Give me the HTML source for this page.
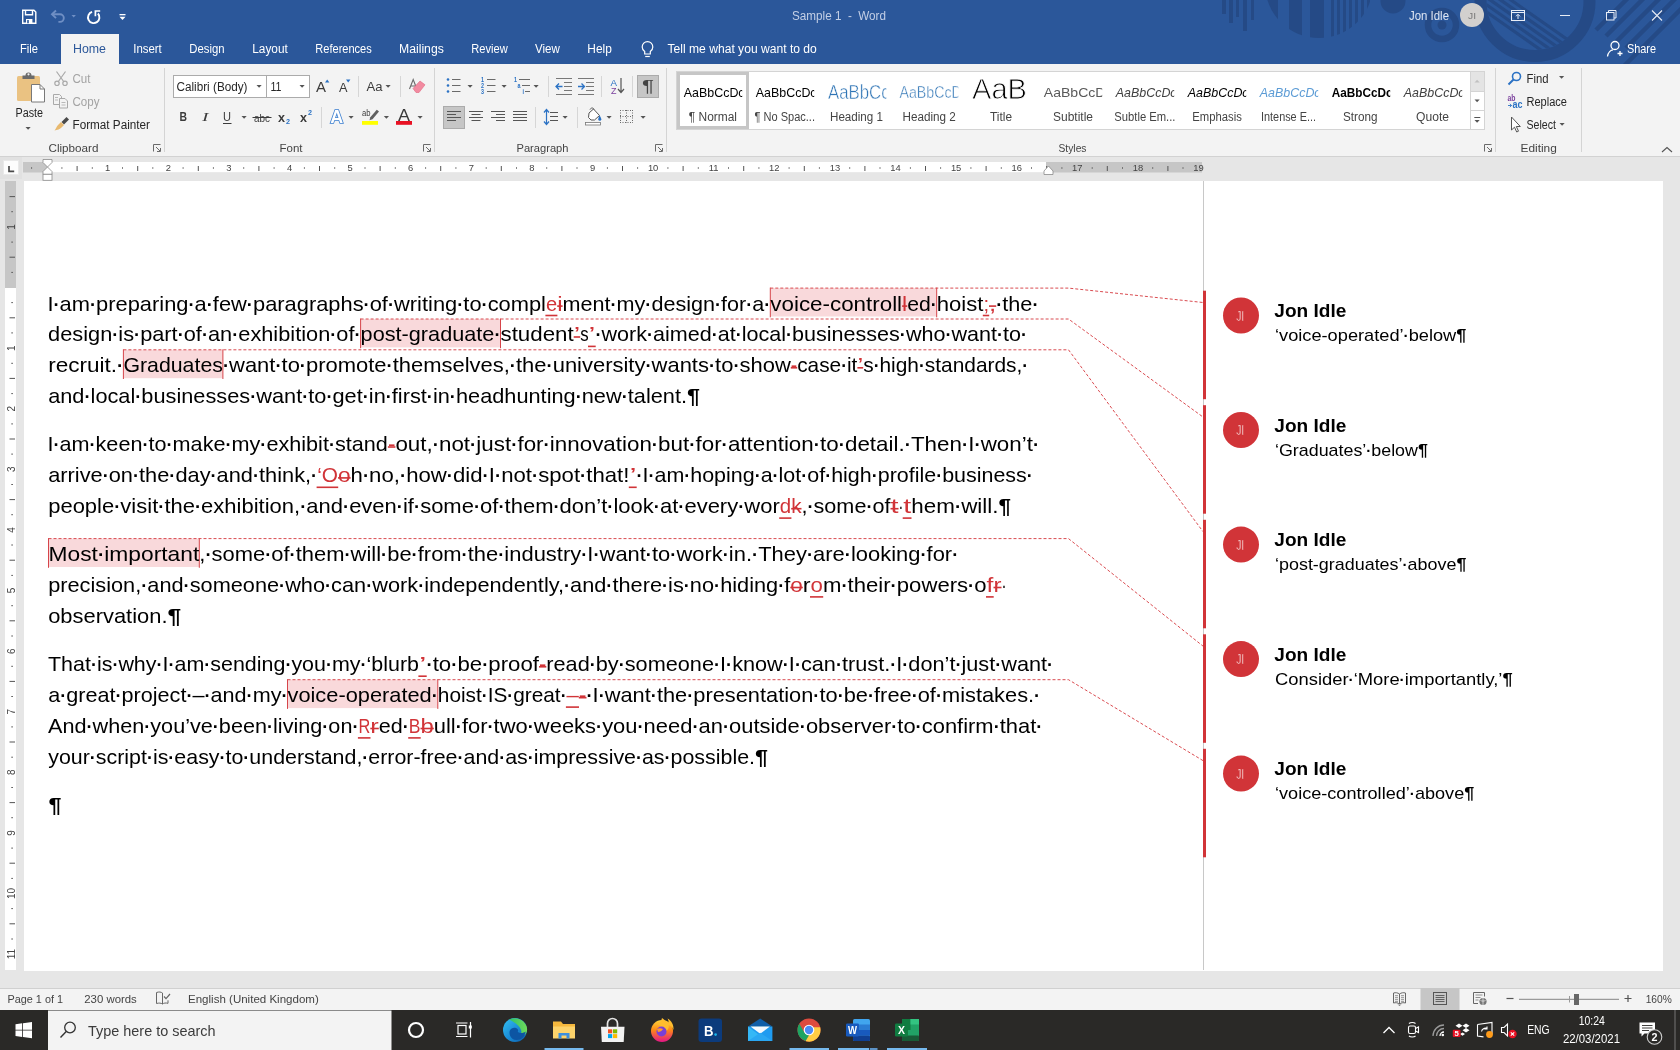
<!DOCTYPE html>
<html>
<head>
<meta charset="utf-8">
<title>Sample 1 - Word</title>
<style>
*{box-sizing:border-box;margin:0;padding:0}
html,body{width:1680px;height:1050px;overflow:hidden;background:#e6e6e6;font-family:"Liberation Sans",sans-serif;}
.abs{position:absolute}
svg{overflow:visible;will-change:transform}
svg text{font-family:"Liberation Sans",sans-serif;white-space:pre}
#titlebar{position:absolute;left:0;top:0;width:1680px;height:64px;background:#2b579a;overflow:hidden}
#ribbon{position:absolute;left:0;top:64px;width:1680px;height:93px;background:#f3f3f3;border-bottom:1px solid #d2d2d2}
#rulerrow{position:absolute;left:0;top:157px;width:1680px;height:24px;background:#e6e6e6}
#page{position:absolute;left:24px;top:181px;width:1639px;height:790px;background:#fff}
#vruler{position:absolute;left:0;top:181px;width:24px;height:789px;background:#e6e6e6}
#status{position:absolute;left:0;top:988px;width:1680px;height:22px;background:#f3f3f3;border-top:1px solid #d0d0d0}
#taskbar{position:absolute;left:0;top:1010px;width:1680px;height:40px;background:#2a2927}
.gsep{position:absolute;top:4px;width:1px;height:84px;background:#d4d4d4}
.ssep{position:absolute;width:1px;height:22px;background:#d6d6d6}
</style>
</head>
<body>
<div id="titlebar">
<!-- decorative background pattern -->
<svg class="abs" style="left:1200px;top:0" width="480" height="64" viewBox="1200 0 480 64">
 <defs><clipPath id="semi"><circle cx="1319" cy="-16" r="54"/></clipPath><clipPath id="bigin"><circle cx="1535" cy="1.500" r="48.500"/></clipPath></defs>
 <g fill="#254a86">
  <rect x="1222" y="0" width="4" height="14"/><rect x="1229" y="0" width="4" height="23"/><rect x="1236" y="0" width="3" height="17"/>
  <rect x="1243" y="0" width="4" height="31"/><rect x="1251" y="0" width="3" height="20"/>
  <g clip-path="url(#semi)">
   <rect x="1262" y="0" width="16" height="40"/><rect x="1289" y="0" width="13" height="40"/><rect x="1310" y="0" width="14" height="40"/>
   <rect x="1331" y="0" width="3" height="40"/><rect x="1337" y="0" width="3" height="40"/><rect x="1343" y="0" width="3" height="40"/>
   <rect x="1349" y="0" width="3" height="40"/><rect x="1355" y="0" width="3" height="40"/><rect x="1361" y="0" width="3" height="40"/><rect x="1367" y="0" width="3" height="40"/>
  </g>
  <circle cx="1393" cy="1" r="12.500"/>
  <circle cx="1442" cy="25" r="4.500"/>
 </g>
 <circle cx="1442" cy="25" r="14" fill="none" stroke="#254a86" stroke-width="6.500"/>
 <circle cx="1535" cy="1.500" r="54.500" fill="none" stroke="#254a86" stroke-width="12"/>
 <g stroke="#254a86" stroke-width="3.200" clip-path="url(#bigin)"><line x1="1491" y1="-14" x2="1611" y2="70"/><line x1="1480.6" y1="-14" x2="1600.6" y2="70"/><line x1="1470.2" y1="-14" x2="1590.2" y2="70"/><line x1="1459.8" y1="-14" x2="1579.8" y2="70"/><line x1="1449.4" y1="-14" x2="1569.4" y2="70"/></g>
 <g stroke="#254a86" stroke-width="4.500">
  <line x1="1596" y1="30" x2="1636" y2="-10"/><line x1="1606" y1="36" x2="1652" y2="-10"/><line x1="1616" y1="42" x2="1668" y2="-10"/>
  <line x1="1626" y1="48" x2="1684" y2="-10"/><line x1="1612" y1="78" x2="1700" y2="-10"/>
 </g>
</svg>
<!-- quick access toolbar -->
<svg class="abs" style="left:0;top:0" width="140" height="32" viewBox="0 0 140 32" fill="none" stroke="#fff" stroke-width="1.4">
 <path d="M22.7 10.2h11.2l1.9 1.9v11.2H22.7z"/><path d="M25.5 10.5v4.2h7v-4.2" /><rect x="26" y="19" width="6.4" height="4.3" fill="#fff" stroke="none"/><rect x="27.2" y="20" width="1.6" height="3.3" fill="#2b579a" stroke="none"/>
 <g stroke="#6f8fc4" stroke-width="1.900"><path d="M52.200 14.300h7.800a3.800 3.800 0 0 1 0 7.600h-1.600"/><path d="M56 10.500l-4 3.800 4 3.800"/></g>
 <path d="M71.5 15l2.2 2.4 2.2-2.4z" fill="#6f8fc4" stroke="none"/>
 <path d="M92.100 11.900A5.700 5.700 0 1 0 97.900 13.500" stroke-width="1.900"/><path d="M95.400 16.200V11H100.200" stroke-width="1.700"/>
 <rect x="119.5" y="14" width="6" height="1.3" fill="#fff" stroke="none"/><path d="M119.5 16.8l3 3.2 3-3.2z" fill="#fff" stroke="none"/>
</svg>
<div class="abs" style="left:1460px;top:3px;width:24px;height:24px;border-radius:12px;background:#d2d0ce"></div>
<svg class="abs" style="left:1500px;top:0" width="180" height="32" viewBox="1500 0 180 32" fill="none" stroke="#e8edf6" stroke-width="1">
 <rect x="1511.5" y="10.5" width="13" height="10"/><line x1="1511" y1="12.5" x2="1525" y2="12.5"/><path d="M1518 19v-4.5M1516 16.3l2-2 2 2"/>
 <line x1="1560" y1="15.5" x2="1570" y2="15.5"/>
 <rect x="1606.500" y="12.5" width="7.5" height="7.500"/><path d="M1608.5 12.500v-2h7.500v7.500h-2"/>
 <path d="M1652 10.5l10 10M1662 10.5l-10 10" stroke-width="1.1"/>
</svg>
<!-- tabs -->
<div class="abs" style="left:61px;top:34px;width:58px;height:30px;background:#f3f3f3"></div>
<svg class="abs" style="left:638px;top:38px" width="20" height="22" viewBox="0 0 20 22" fill="none" stroke="#fff" stroke-width="1.2"><path d="M6.700 13.500c-1.600-1.200-2.500-2.600-2.500-4.600a5.300 5.300 0 0 1 10.600 0c0 2-.9 3.400-2.500 4.600v2.500h-5.600z"/><path d="M7.200 18.500h4.600"/></svg>
<svg class="abs" style="left:1604px;top:38px" width="22" height="22" viewBox="0 0 22 22" fill="none" stroke="#fff" stroke-width="1.3"><circle cx="11" cy="7.500" r="4"/><path d="M3.500 18.500c.6-4 3.300-6.400 5.600-6.600"/><path d="M13.500 15.500h5M16 13v5"/></svg>
</div>
<div id="ribbon">
<div class="gsep" style="left:164px"></div><div class="gsep" style="left:434px"></div><div class="gsep" style="left:666px"></div><div class="gsep" style="left:1495px"></div><div class="gsep" style="left:1581px"></div>
<svg class="abs" style="left:0;top:0" width="1680" height="93" viewBox="0 64 1680 93" fill="none">
<!-- ===== Clipboard ===== -->
<g>
 <rect x="17" y="76" width="23" height="25" rx="1.500" fill="#eac282"/>
 <path d="M22.500 79v-3.500h3a3 3 0 0 1 6 0h3v3.500z" fill="#6b6b6b"/>
 <circle cx="28.500" cy="74.300" r="1.100" fill="#f3f3f3"/>
 <path d="M31.500 84.500h8.500l4.500 4.500v13h-13z" fill="#fff" stroke="#797979"/>
 <path d="M40 84.500v4.500h4.500" stroke="#797979"/>
 <path d="M25.500 127l2.600 2.800 2.600-2.800z" fill="#555"/>
</g>
<g stroke="#a9a9a9" stroke-width="1.200">
 <path d="M56.500 71.500l7.500 10.500M65.500 71.500l-7.500 10.500"/><circle cx="57" cy="83.300" r="2.200"/><circle cx="65" cy="83.300" r="2.200"/>
 <path d="M53.500 94.500h6l2 2v8h-8z" stroke-width="1"/><path d="M59.500 98.500h5.500l2.500 2.500v7h-8z" fill="#f3f3f3" stroke-width="1"/><path d="M61.500 102.500h4M61.500 105h4" stroke-width=".8"/><path d="M55 97.500h3M55 100h3" stroke-width=".8"/>
</g>
<g>
 <path d="M66.500 117l2.500 2.500-5 5-2.500-2.500z" fill="#4a4a4a"/>
 <path d="M61 122l3 3-2.200 2.200c-1.800 1.800-4.500 2.800-7.300 3.300 1.500-1.600 1.700-3.300 3.500-5.500z" fill="#e8b96f"/>
</g>
<!-- dialog launchers -->
<g stroke="#6a6a6a" stroke-width="1">
 <g transform="translate(0)"><path d="M153.500 151.500v-7h7"/><path d="M156 147l4 4M160.500 148v3.500h-3.500"/></g>
 <g transform="translate(270)"><path d="M153.500 151.500v-7h7"/><path d="M156 147l4 4M160.500 148v3.500h-3.500"/></g>
 <g transform="translate(502)"><path d="M153.500 151.500v-7h7"/><path d="M156 147l4 4M160.500 148v3.500h-3.500"/></g>
 <g transform="translate(1331)"><path d="M153.500 151.500v-7h7"/><path d="M156 147l4 4M160.500 148v3.500h-3.500"/></g>
</g>
<!-- ===== Font ===== -->
<rect x="173.500" y="75.500" width="93" height="22" fill="#fff" stroke="#ababab"/>
<rect x="266.500" y="75.500" width="43" height="22" fill="#fff" stroke="#ababab"/>
<g fill="#555"><path d="M256.500 85l2.600 2.800 2.600-2.800z"/><path d="M299.500 85l2.600 2.800 2.600-2.800z"/>
 <path d="M385.500 85l2.600 2.800 2.600-2.800z"/><path d="M241.500 116l2.600 2.800 2.600-2.800z"/>
 <path d="M348.500 116l2.600 2.800 2.600-2.800z"/><path d="M383.800 116l2.600 2.800 2.600-2.800z"/><path d="M417.500 116l2.600 2.800 2.600-2.800z"/>
</g>
<path d="M325 82.500l2.200-3 2.200 3z" fill="#2b72c4"/><path d="M346 79.500l2.200 3 2.200-3z" fill="#2b72c4"/>
<g stroke="#d6d6d6"><path d="M358.500 76v21M400.500 76v21M321.500 107v21"/></g>
<!-- clear formatting -->
<path d="M409.500 89l3.700-9.500 3.700 9.500M410.800 86h4.800" stroke="#6a6a6a" stroke-width="1.100"/>
<path d="M413 88.500l7-7.500 5 3.800-6 7.700h-3z" fill="#f28aa0" stroke="#e0667f" stroke-width=".6"/>
<!-- underline bar, strike -->
<path d="M223 123.500h8.500" stroke="#3b3b3b" stroke-width="1"/>
<path d="M252.500 117.500h19" stroke="#3b3b3b" stroke-width="1"/>
<!-- text effects A -->
<!-- highlight -->
<rect x="362" y="121" width="16" height="3.800" fill="#ffff00"/>
<path d="M369.500 120.300l.8-3 6.500-7.500 2.200 1.800-6.500 7.600z" fill="#5f5f5f"/>
<!-- font color -->
<rect x="396" y="121" width="16" height="3.800" fill="#e81123"/>
<!-- ===== Paragraph row 1 ===== -->
<g fill="#2b72c4"><circle cx="448" cy="79.500" r="1.300"/><circle cx="448" cy="85.500" r="1.300"/><circle cx="448" cy="91.500" r="1.300"/></g>
<g stroke="#6a6a6a" stroke-width="1"><path d="M452 79.500h8.500M452 85.500h8.500M452 91.500h8.500"/>
 <path d="M487 79.500h8.500M487 85.500h8.500M487 91.500h8.500"/>
 <path d="M519 79.500h11M522 85.500h8M525 91.500h5"/></g>
<g fill="#555"><path d="M467.500 85l2.600 2.800 2.600-2.800z"/><path d="M501.500 85l2.600 2.800 2.600-2.800z"/><path d="M533.500 85l2.600 2.800 2.600-2.800z"/>
 <path d="M562.500 116l2.600 2.800 2.600-2.800z"/><path d="M606.500 116l2.600 2.800 2.600-2.800z"/><path d="M640.500 116l2.600 2.800 2.600-2.800z"/></g>
<g stroke="#d6d6d6"><path d="M548.500 76v21M601.500 76v21M632.500 76v21M535.500 107v21M577.500 107v21"/></g>
<!-- outdent / indent -->
<g stroke="#6a6a6a"><path d="M556 78.500h16M564 82.500h8M564 86.500h8M564 90.500h8M556 94.500h16" stroke-width=".9"/>
 <path d="M578 78.500h16M586 82.500h8M586 86.500h8M586 90.500h8M578 94.500h16" stroke-width=".9"/></g>
<g stroke="#2b72c4" stroke-width="1.300"><path d="M562.500 86.500h-6M559 83.500l-3 3 3 3"/><path d="M578 86.500h6M581.500 83.500l3 3-3 3"/></g>
<!-- sort -->
<path d="M621 78v14M618 89l3 3.500 3-3.500" stroke="#555" stroke-width="1.200"/>
<!-- pilcrow button -->
<rect x="637.500" y="75.500" width="21" height="22" fill="#c6c6c6" stroke="#ababab"/>
<!-- ===== Paragraph row 2 ===== -->
<rect x="443.500" y="106.500" width="21" height="22" fill="#c6c6c6" stroke="#ababab"/>
<g stroke="#555" stroke-width="1">
 <path d="M447 111.500h14M447 114.500h9M447 117.500h14M447 120.500h9"/>
 <path d="M469 111.500h14M471.500 114.500h9M469 117.500h14M471.500 120.500h9"/>
 <path d="M491 111.500h14M496 114.500h9M491 117.500h14M496 120.500h9"/>
 <path d="M513 111.500h14M513 114.500h14M513 117.500h14M513 120.500h14"/>
 <path d="M550 112.500h8M550 116.500h8M550 120.500h8"/>
</g>
<path d="M546.500 110v14M544 112.500l2.500-3 2.500 3M544 121.500l2.500 3 2.500-3" stroke="#2b72c4" stroke-width="1.200"/>
<!-- shading bucket -->
<path d="M589 113l4.500-4 6 6.500-5 4.500h-3.500l-2.500-2.500z" fill="#fff" stroke="#555" stroke-width="1"/>
<path d="M590 109.500c1-2 3.500-2 4 0" stroke="#555"/>
<path d="M599.500 115.500c1 1.500 1.800 2.800 1.800 3.800a1.500 1.500 0 0 1-3 0c0-1 .5-2.300 1.200-3.800z" fill="#2b72c4"/>
<rect x="585.500" y="122.500" width="15" height="2.500" fill="#fff" stroke="#777" stroke-width=".8"/>
<!-- borders -->
<g stroke="#6a6a6a" stroke-width="1" stroke-dasharray="1 1.500"><path d="M620 110.500h13M620 116.500h13M620 122.500h13M620.500 110v13M626.500 110v13M632.500 110v13"/></g>
<!-- ===== Styles gallery ===== -->
<rect x="676.500" y="71.500" width="808" height="58" fill="#fff" stroke="#d4d4d4"/>
<rect x="678.500" y="73.500" width="69" height="54" fill="#fff" stroke="#c6c6c6" stroke-width="3"/>
<g stroke="#d4d4d4"><path d="M1470.500 71.500v58M1470.500 91.500h14M1470.500 110.500h14"/></g>
<rect x="1471" y="72" width="13" height="19" fill="#e4e4e4"/>
<path d="M1474.500 82.500l2.600-2.800 2.600 2.800z" fill="#c0c0c0"/>
<path d="M1474.500 99.500l2.600 2.800 2.600-2.800z" fill="#555"/>
<path d="M1474.300 117.500h6" stroke="#555"/><path d="M1474.500 120l2.600 2.800 2.600-2.800z" fill="#555"/>
<!-- ===== Editing ===== -->
<circle cx="1516.500" cy="76.500" r="4" stroke="#2b72c4" stroke-width="1.600"/><path d="M1513.500 79.500l-5 5" stroke="#2b72c4" stroke-width="2"/>
<path d="M1508 105.500h3.500M1509.800 103.800l1.800 1.700-1.800 1.700" stroke="#2b72c4" stroke-width=".9"/>
<path d="M1511.500 117v13l3-2.800 2.200 4.800 1.800-.8-2.200-4.700h4z" fill="#fff" stroke="#555" stroke-width="1" stroke-linejoin="round"/>
<g fill="#555"><path d="M1559 76l2.600 2.800 2.600-2.800z"/><path d="M1559.500 123l2.600 2.800 2.600-2.800z"/></g>
<path d="M1662 152l5-4.500 5 4.500" stroke="#555" stroke-width="1.100"/>
</svg>
</div>
<div id="rulerrow"></div>
<div id="vruler"></div>
<div id="page"></div>
<svg class="abs" style="left:0;top:157px" width="1680" height="830" viewBox="0 157 1680 830" font-family="Liberation Sans, sans-serif">
<rect x="0" y="157" width="22" height="22" fill="#e1e1e1"/>
<rect x="3.5" y="160.500" width="15" height="14" fill="#fdfdfd" stroke="#e9e9e9"/>
<path d="M9 166v5.300h5.200" fill="none" stroke="#4a4a4a" stroke-width="1.700"/>
<rect x="23" y="162" width="1179" height="10.500" fill="#c6c6c6"/>
<rect x="47" y="162" width="999" height="10.500" fill="#ffffff"/>
<rect x="31.1" y="167.300" width="1" height="1.400" fill="#555"/>
<rect x="61.4" y="167.300" width="1" height="1.400" fill="#555"/>
<rect x="76.6" y="166" width="1" height="5" fill="#555"/>
<rect x="91.8" y="167.300" width="1" height="1.400" fill="#555"/>
<text x="107.7" y="171" font-size="9.4" fill="#444" text-anchor="middle">1</text>
<rect x="122.0" y="167.300" width="1" height="1.400" fill="#555"/>
<rect x="137.2" y="166" width="1" height="5" fill="#555"/>
<rect x="152.3" y="167.300" width="1" height="1.400" fill="#555"/>
<text x="168.3" y="171" font-size="9.4" fill="#444" text-anchor="middle">2</text>
<rect x="182.6" y="167.300" width="1" height="1.400" fill="#555"/>
<rect x="197.8" y="166" width="1" height="5" fill="#555"/>
<rect x="212.9" y="167.300" width="1" height="1.400" fill="#555"/>
<text x="228.9" y="171" font-size="9.4" fill="#444" text-anchor="middle">3</text>
<rect x="243.2" y="167.300" width="1" height="1.400" fill="#555"/>
<rect x="258.4" y="166" width="1" height="5" fill="#555"/>
<rect x="273.6" y="167.300" width="1" height="1.400" fill="#555"/>
<text x="289.5" y="171" font-size="9.4" fill="#444" text-anchor="middle">4</text>
<rect x="303.9" y="167.300" width="1" height="1.400" fill="#555"/>
<rect x="319.0" y="166" width="1" height="5" fill="#555"/>
<rect x="334.2" y="167.300" width="1" height="1.400" fill="#555"/>
<text x="350.1" y="171" font-size="9.4" fill="#444" text-anchor="middle">5</text>
<rect x="364.5" y="167.300" width="1" height="1.400" fill="#555"/>
<rect x="379.6" y="166" width="1" height="5" fill="#555"/>
<rect x="394.8" y="167.300" width="1" height="1.400" fill="#555"/>
<text x="410.7" y="171" font-size="9.4" fill="#444" text-anchor="middle">6</text>
<rect x="425.1" y="167.300" width="1" height="1.400" fill="#555"/>
<rect x="440.2" y="166" width="1" height="5" fill="#555"/>
<rect x="455.4" y="167.300" width="1" height="1.400" fill="#555"/>
<text x="471.3" y="171" font-size="9.4" fill="#444" text-anchor="middle">7</text>
<rect x="485.7" y="167.300" width="1" height="1.400" fill="#555"/>
<rect x="500.8" y="166" width="1" height="5" fill="#555"/>
<rect x="516.0" y="167.300" width="1" height="1.400" fill="#555"/>
<text x="531.9" y="171" font-size="9.4" fill="#444" text-anchor="middle">8</text>
<rect x="546.2" y="167.300" width="1" height="1.400" fill="#555"/>
<rect x="561.4" y="166" width="1" height="5" fill="#555"/>
<rect x="576.5" y="167.300" width="1" height="1.400" fill="#555"/>
<text x="592.5" y="171" font-size="9.4" fill="#444" text-anchor="middle">9</text>
<rect x="606.9" y="167.300" width="1" height="1.400" fill="#555"/>
<rect x="622.0" y="166" width="1" height="5" fill="#555"/>
<rect x="637.1" y="167.300" width="1" height="1.400" fill="#555"/>
<text x="653.1" y="171" font-size="9.4" fill="#444" text-anchor="middle">10</text>
<rect x="667.4" y="167.300" width="1" height="1.400" fill="#555"/>
<rect x="682.6" y="166" width="1" height="5" fill="#555"/>
<rect x="697.8" y="167.300" width="1" height="1.400" fill="#555"/>
<text x="713.7" y="171" font-size="9.4" fill="#444" text-anchor="middle">11</text>
<rect x="728.0" y="167.300" width="1" height="1.400" fill="#555"/>
<rect x="743.2" y="166" width="1" height="5" fill="#555"/>
<rect x="758.4" y="167.300" width="1" height="1.400" fill="#555"/>
<text x="774.3" y="171" font-size="9.4" fill="#444" text-anchor="middle">12</text>
<rect x="788.6" y="167.300" width="1" height="1.400" fill="#555"/>
<rect x="803.8" y="166" width="1" height="5" fill="#555"/>
<rect x="818.9" y="167.300" width="1" height="1.400" fill="#555"/>
<text x="834.9" y="171" font-size="9.4" fill="#444" text-anchor="middle">13</text>
<rect x="849.2" y="167.300" width="1" height="1.400" fill="#555"/>
<rect x="864.4" y="166" width="1" height="5" fill="#555"/>
<rect x="879.5" y="167.300" width="1" height="1.400" fill="#555"/>
<text x="895.5" y="171" font-size="9.4" fill="#444" text-anchor="middle">14</text>
<rect x="909.9" y="167.300" width="1" height="1.400" fill="#555"/>
<rect x="925.0" y="166" width="1" height="5" fill="#555"/>
<rect x="940.1" y="167.300" width="1" height="1.400" fill="#555"/>
<text x="956.1" y="171" font-size="9.4" fill="#444" text-anchor="middle">15</text>
<rect x="970.4" y="167.300" width="1" height="1.400" fill="#555"/>
<rect x="985.6" y="166" width="1" height="5" fill="#555"/>
<rect x="1000.8" y="167.300" width="1" height="1.400" fill="#555"/>
<text x="1016.7" y="171" font-size="9.4" fill="#444" text-anchor="middle">16</text>
<rect x="1031.0" y="167.300" width="1" height="1.400" fill="#555"/>
<rect x="1046.2" y="166" width="1" height="5" fill="#555"/>
<rect x="1061.4" y="167.300" width="1" height="1.400" fill="#555"/>
<text x="1077.3" y="171" font-size="9.4" fill="#444" text-anchor="middle">17</text>
<rect x="1091.7" y="167.300" width="1" height="1.400" fill="#555"/>
<rect x="1106.8" y="166" width="1" height="5" fill="#555"/>
<rect x="1122.0" y="167.300" width="1" height="1.400" fill="#555"/>
<text x="1137.9" y="171" font-size="9.4" fill="#444" text-anchor="middle">18</text>
<rect x="1152.2" y="167.300" width="1" height="1.400" fill="#555"/>
<rect x="1167.4" y="166" width="1" height="5" fill="#555"/>
<rect x="1182.5" y="167.300" width="1" height="1.400" fill="#555"/>
<text x="1198.5" y="171" font-size="9.4" fill="#444" text-anchor="middle">19</text>
<path d="M43 159.500h9v3l-4.500 4.500l-4.500-4.500z" fill="#fff" stroke="#8a8a8a" stroke-width=".8"/>
<path d="M43 174.300v-2.800l4.500-4.500l4.500 4.500v2.800z" fill="#fff" stroke="#8a8a8a" stroke-width=".8"/>
<rect x="43" y="174.300" width="9" height="6" fill="#fff" stroke="#8a8a8a" stroke-width=".8"/>
<path d="M1044 174.500v-3.500l4.500-5l4.500 5v3.500z" fill="#fff" stroke="#8a8a8a" stroke-width=".8"/>
<rect x="5" y="181" width="11" height="789" fill="#ffffff"/>
<rect x="5" y="181" width="11" height="107" fill="#c6c6c6"/>
<rect x="9.500" y="196.1" width="5.500" height="1" fill="#555"/>
<rect x="11.300" y="211.2" width="1.600" height="1" fill="#555"/>
<text transform="translate(14.5,226.9) rotate(-90)" font-size="10" fill="#444" text-anchor="middle">1</text>
<rect x="11.300" y="241.6" width="1.600" height="1" fill="#555"/>
<rect x="9.500" y="256.7" width="5.500" height="1" fill="#555"/>
<rect x="11.300" y="271.9" width="1.600" height="1" fill="#555"/>
<rect x="11.300" y="302.1" width="1.600" height="1" fill="#555"/>
<rect x="9.500" y="317.3" width="5.500" height="1" fill="#555"/>
<rect x="11.300" y="332.4" width="1.600" height="1" fill="#555"/>
<text transform="translate(14.5,348.1) rotate(-90)" font-size="10" fill="#444" text-anchor="middle">1</text>
<rect x="11.300" y="362.8" width="1.600" height="1" fill="#555"/>
<rect x="9.500" y="377.9" width="5.500" height="1" fill="#555"/>
<rect x="11.300" y="393.1" width="1.600" height="1" fill="#555"/>
<text transform="translate(14.5,408.7) rotate(-90)" font-size="10" fill="#444" text-anchor="middle">2</text>
<rect x="11.300" y="423.4" width="1.600" height="1" fill="#555"/>
<rect x="9.500" y="438.5" width="5.500" height="1" fill="#555"/>
<rect x="11.300" y="453.6" width="1.600" height="1" fill="#555"/>
<text transform="translate(14.5,469.3) rotate(-90)" font-size="10" fill="#444" text-anchor="middle">3</text>
<rect x="11.300" y="484.0" width="1.600" height="1" fill="#555"/>
<rect x="9.500" y="499.1" width="5.500" height="1" fill="#555"/>
<rect x="11.300" y="514.2" width="1.600" height="1" fill="#555"/>
<text transform="translate(14.5,529.9) rotate(-90)" font-size="10" fill="#444" text-anchor="middle">4</text>
<rect x="11.300" y="544.5" width="1.600" height="1" fill="#555"/>
<rect x="9.500" y="559.7" width="5.500" height="1" fill="#555"/>
<rect x="11.300" y="574.9" width="1.600" height="1" fill="#555"/>
<text transform="translate(14.5,590.5) rotate(-90)" font-size="10" fill="#444" text-anchor="middle">5</text>
<rect x="11.300" y="605.2" width="1.600" height="1" fill="#555"/>
<rect x="9.500" y="620.3" width="5.500" height="1" fill="#555"/>
<rect x="11.300" y="635.5" width="1.600" height="1" fill="#555"/>
<text transform="translate(14.5,651.1) rotate(-90)" font-size="10" fill="#444" text-anchor="middle">6</text>
<rect x="11.300" y="665.8" width="1.600" height="1" fill="#555"/>
<rect x="9.500" y="680.9" width="5.500" height="1" fill="#555"/>
<rect x="11.300" y="696.0" width="1.600" height="1" fill="#555"/>
<text transform="translate(14.5,711.7) rotate(-90)" font-size="10" fill="#444" text-anchor="middle">7</text>
<rect x="11.300" y="726.4" width="1.600" height="1" fill="#555"/>
<rect x="9.500" y="741.5" width="5.500" height="1" fill="#555"/>
<rect x="11.300" y="756.7" width="1.600" height="1" fill="#555"/>
<text transform="translate(14.5,772.3) rotate(-90)" font-size="10" fill="#444" text-anchor="middle">8</text>
<rect x="11.300" y="787.0" width="1.600" height="1" fill="#555"/>
<rect x="9.500" y="802.1" width="5.500" height="1" fill="#555"/>
<rect x="11.300" y="817.2" width="1.600" height="1" fill="#555"/>
<text transform="translate(14.5,832.9) rotate(-90)" font-size="10" fill="#444" text-anchor="middle">9</text>
<rect x="11.300" y="847.6" width="1.600" height="1" fill="#555"/>
<rect x="9.500" y="862.7" width="5.500" height="1" fill="#555"/>
<rect x="11.300" y="877.9" width="1.600" height="1" fill="#555"/>
<text transform="translate(14.5,893.5) rotate(-90)" font-size="10" fill="#444" text-anchor="middle">10</text>
<rect x="11.300" y="908.1" width="1.600" height="1" fill="#555"/>
<rect x="9.500" y="923.3" width="5.500" height="1" fill="#555"/>
<rect x="11.300" y="938.5" width="1.600" height="1" fill="#555"/>
<text transform="translate(14.5,954.1) rotate(-90)" font-size="10" fill="#444" text-anchor="middle">11</text>
<rect x="1203" y="181" width="1" height="789" fill="#c8c8c8"/>
</svg>
<svg class="abs" style="left:0;top:0" width="1680" height="1050" viewBox="0 0 1680 1050" font-family="Liberation Sans, sans-serif">
<rect x="770.3" y="288.1" width="166.4" height="28.4" fill="#f9d9db"/>
<path d="M770.3 287.6V317.3M936.7 287.6V317.3" stroke="#d6454a" stroke-width="1" fill="none"/>
<path d="M770.3 288.1H1068.5L1203 302.5" stroke="#d94b50" stroke-width="1" stroke-dasharray="3 2" fill="none"/>
<rect x="360.6" y="319.0" width="139.9" height="28.4" fill="#f9d9db"/>
<path d="M360.6 318.5V348.2M500.5 318.5V348.2" stroke="#d6454a" stroke-width="1" fill="none"/>
<path d="M360.6 319.0H1068.5L1203 417.0" stroke="#d94b50" stroke-width="1" stroke-dasharray="3 2" fill="none"/>
<rect x="123.4" y="349.8" width="99.5" height="28.4" fill="#f9d9db"/>
<path d="M123.4 349.3V379.0M222.9 349.3V379.0" stroke="#d6454a" stroke-width="1" fill="none"/>
<path d="M123.4 349.8H1068.5L1203 531.6" stroke="#d94b50" stroke-width="1" stroke-dasharray="3 2" fill="none"/>
<rect x="48.5" y="538.6" width="150.8" height="28.4" fill="#f9d9db"/>
<path d="M48.5 538.1V567.8M199.3 538.1V567.8" stroke="#d6454a" stroke-width="1" fill="none"/>
<path d="M48.5 538.6H1068.5L1203 646.1" stroke="#d94b50" stroke-width="1" stroke-dasharray="3 2" fill="none"/>
<rect x="287.5" y="679.7" width="150.3" height="28.4" fill="#f9d9db"/>
<path d="M287.5 679.2V708.9M437.8 679.2V708.9" stroke="#d6454a" stroke-width="1" fill="none"/>
<path d="M287.5 679.7H1068.5L1203 760.6" stroke="#d94b50" stroke-width="1" stroke-dasharray="3 2" fill="none"/>
<text x="47.4" y="310.5" textLength="498.6" lengthAdjust="spacingAndGlyphs" font-size="21" fill="#000">I<tspan font-size="17.64" font-weight="bold">·</tspan>am<tspan font-size="17.64" font-weight="bold">·</tspan>preparing<tspan font-size="17.64" font-weight="bold">·</tspan>a<tspan font-size="17.64" font-weight="bold">·</tspan>few<tspan font-size="17.64" font-weight="bold">·</tspan>paragraphs<tspan font-size="17.64" font-weight="bold">·</tspan>of<tspan font-size="17.64" font-weight="bold">·</tspan>writing<tspan font-size="17.64" font-weight="bold">·</tspan>to<tspan font-size="17.64" font-weight="bold">·</tspan>compl</text>
<text x="546" y="310.5" textLength="11.2" lengthAdjust="spacingAndGlyphs" font-size="21" fill="#d13438">e</text>
<rect x="545.4" y="314.7" width="12.0" height="1.600" fill="#d13438"/>
<text x="557.2" y="310.5" textLength="5.4" lengthAdjust="spacingAndGlyphs" font-size="21" fill="#d13438">i</text>
<rect x="557.2" y="305.3" width="5.4" height="1.600" fill="#d13438"/>
<text x="562.6" y="310.5" textLength="207.7" lengthAdjust="spacingAndGlyphs" font-size="21" fill="#000">ment<tspan font-size="17.64" font-weight="bold">·</tspan>my<tspan font-size="17.64" font-weight="bold">·</tspan>design<tspan font-size="17.64" font-weight="bold">·</tspan>for<tspan font-size="17.64" font-weight="bold">·</tspan>a<tspan font-size="17.64" font-weight="bold">·</tspan></text>
<text x="770.3" y="310.5" textLength="131.8" lengthAdjust="spacingAndGlyphs" font-size="21" fill="#000">voice-controll</text>
<text x="902.1" y="310.5" textLength="5.1" lengthAdjust="spacingAndGlyphs" font-size="21" fill="#d13438">l</text>
<rect x="902.1" y="305.3" width="5.1" height="1.600" fill="#d13438"/>
<text x="907.2" y="310.5" textLength="29.5" lengthAdjust="spacingAndGlyphs" font-size="21" fill="#000">ed<tspan font-size="17.64" font-weight="bold">·</tspan></text>
<text x="936.7" y="310.5" textLength="46.7" lengthAdjust="spacingAndGlyphs" font-size="21" fill="#000">hoist</text>
<text x="983.4" y="310.5" textLength="5.6" lengthAdjust="spacingAndGlyphs" font-size="21" fill="#d13438">;</text>
<rect x="982.8" y="314.7" width="6.4" height="1.600" fill="#d13438"/>
<text x="989" y="310.5" textLength="7.2" lengthAdjust="spacingAndGlyphs" font-size="21" fill="#d13438">,</text>
<rect x="989.0" y="305.3" width="7.2" height="1.600" fill="#d13438"/>
<text x="996.2" y="310.5" textLength="42.3" lengthAdjust="spacingAndGlyphs" font-size="21" fill="#000"><tspan font-size="17.64" font-weight="bold">·</tspan>the<tspan font-size="17.64" font-weight="bold">·</tspan></text>
<text x="48.1" y="341.37" textLength="312.5" lengthAdjust="spacingAndGlyphs" font-size="21" fill="#000">design<tspan font-size="17.64" font-weight="bold">·</tspan>is<tspan font-size="17.64" font-weight="bold">·</tspan>part<tspan font-size="17.64" font-weight="bold">·</tspan>of<tspan font-size="17.64" font-weight="bold">·</tspan>an<tspan font-size="17.64" font-weight="bold">·</tspan>exhibition<tspan font-size="17.64" font-weight="bold">·</tspan>of<tspan font-size="17.64" font-weight="bold">·</tspan></text>
<text x="360.6" y="341.37" textLength="139.9" lengthAdjust="spacingAndGlyphs" font-size="21" fill="#000">post-graduate<tspan font-size="17.64" font-weight="bold">·</tspan></text>
<text x="500.5" y="341.37" textLength="73.2" lengthAdjust="spacingAndGlyphs" font-size="21" fill="#000">student</text>
<text x="573.7" y="341.37" textLength="6.5" lengthAdjust="spacingAndGlyphs" font-size="21" fill="#d13438">’</text>
<rect x="573.7" y="336.2" width="6.5" height="1.600" fill="#d13438"/>
<text x="580.2" y="341.37" textLength="8.4" lengthAdjust="spacingAndGlyphs" font-size="21" fill="#000">s</text>
<text x="588.6" y="341.37" textLength="6.9" lengthAdjust="spacingAndGlyphs" font-size="21" fill="#d13438">’</text>
<rect x="588.0" y="345.6" width="7.7" height="1.600" fill="#d13438"/>
<text x="595.5" y="341.37" textLength="431.5" lengthAdjust="spacingAndGlyphs" font-size="21" fill="#000"><tspan font-size="17.64" font-weight="bold">·</tspan>work<tspan font-size="17.64" font-weight="bold">·</tspan>aimed<tspan font-size="17.64" font-weight="bold">·</tspan>at<tspan font-size="17.64" font-weight="bold">·</tspan>local<tspan font-size="17.64" font-weight="bold">·</tspan>businesses<tspan font-size="17.64" font-weight="bold">·</tspan>who<tspan font-size="17.64" font-weight="bold">·</tspan>want<tspan font-size="17.64" font-weight="bold">·</tspan>to<tspan font-size="17.64" font-weight="bold">·</tspan></text>
<text x="48.2" y="372.24" textLength="75.2" lengthAdjust="spacingAndGlyphs" font-size="21" fill="#000">recruit.<tspan font-size="17.64" font-weight="bold">·</tspan></text>
<text x="123.4" y="372.24" textLength="99.5" lengthAdjust="spacingAndGlyphs" font-size="21" fill="#000">Graduates</text>
<text x="222.9" y="372.24" textLength="567.9" lengthAdjust="spacingAndGlyphs" font-size="21" fill="#000"><tspan font-size="17.64" font-weight="bold">·</tspan>want<tspan font-size="17.64" font-weight="bold">·</tspan>to<tspan font-size="17.64" font-weight="bold">·</tspan>promote<tspan font-size="17.64" font-weight="bold">·</tspan>themselves,<tspan font-size="17.64" font-weight="bold">·</tspan>the<tspan font-size="17.64" font-weight="bold">·</tspan>university<tspan font-size="17.64" font-weight="bold">·</tspan>wants<tspan font-size="17.64" font-weight="bold">·</tspan>to<tspan font-size="17.64" font-weight="bold">·</tspan>show</text>
<text x="790.8" y="372.24" textLength="6.4" lengthAdjust="spacingAndGlyphs" font-size="21" fill="#d13438">-</text>
<rect x="790.8" y="367.0" width="6.4" height="1.600" fill="#d13438"/>
<text x="797.2" y="372.24" textLength="60.2" lengthAdjust="spacingAndGlyphs" font-size="21" fill="#000">case<tspan font-size="17.64" font-weight="bold">·</tspan>it</text>
<text x="857.4" y="372.24" textLength="5.8" lengthAdjust="spacingAndGlyphs" font-size="21" fill="#d13438">’</text>
<rect x="857.4" y="367.0" width="5.8" height="1.600" fill="#d13438"/>
<text x="863.2" y="372.24" textLength="165" lengthAdjust="spacingAndGlyphs" font-size="21" fill="#000">s<tspan font-size="17.64" font-weight="bold">·</tspan>high<tspan font-size="17.64" font-weight="bold">·</tspan>standards,<tspan font-size="17.64" font-weight="bold">·</tspan></text>
<text x="48.2" y="403.11" textLength="638.8" lengthAdjust="spacingAndGlyphs" font-size="21" fill="#000">and<tspan font-size="17.64" font-weight="bold">·</tspan>local<tspan font-size="17.64" font-weight="bold">·</tspan>businesses<tspan font-size="17.64" font-weight="bold">·</tspan>want<tspan font-size="17.64" font-weight="bold">·</tspan>to<tspan font-size="17.64" font-weight="bold">·</tspan>get<tspan font-size="17.64" font-weight="bold">·</tspan>in<tspan font-size="17.64" font-weight="bold">·</tspan>first<tspan font-size="17.64" font-weight="bold">·</tspan>in<tspan font-size="17.64" font-weight="bold">·</tspan>headhunting<tspan font-size="17.64" font-weight="bold">·</tspan>new<tspan font-size="17.64" font-weight="bold">·</tspan>talent.</text>
<text x="687" y="403.11" textLength="13" lengthAdjust="spacingAndGlyphs" font-size="21" fill="#000" font-weight="bold">¶</text>
<text x="47.4" y="451.4" textLength="340.5" lengthAdjust="spacingAndGlyphs" font-size="21" fill="#000">I<tspan font-size="17.64" font-weight="bold">·</tspan>am<tspan font-size="17.64" font-weight="bold">·</tspan>keen<tspan font-size="17.64" font-weight="bold">·</tspan>to<tspan font-size="17.64" font-weight="bold">·</tspan>make<tspan font-size="17.64" font-weight="bold">·</tspan>my<tspan font-size="17.64" font-weight="bold">·</tspan>exhibit<tspan font-size="17.64" font-weight="bold">·</tspan>stand</text>
<text x="387.9" y="451.4" textLength="7.5" lengthAdjust="spacingAndGlyphs" font-size="21" fill="#d13438">-</text>
<rect x="387.9" y="446.2" width="7.5" height="1.600" fill="#d13438"/>
<text x="395.4" y="451.4" textLength="643.8" lengthAdjust="spacingAndGlyphs" font-size="21" fill="#000">out,<tspan font-size="17.64" font-weight="bold">·</tspan>not<tspan font-size="17.64" font-weight="bold">·</tspan>just<tspan font-size="17.64" font-weight="bold">·</tspan>for<tspan font-size="17.64" font-weight="bold">·</tspan>innovation<tspan font-size="17.64" font-weight="bold">·</tspan>but<tspan font-size="17.64" font-weight="bold">·</tspan>for<tspan font-size="17.64" font-weight="bold">·</tspan>attention<tspan font-size="17.64" font-weight="bold">·</tspan>to<tspan font-size="17.64" font-weight="bold">·</tspan>detail.<tspan font-size="17.64" font-weight="bold">·</tspan>Then<tspan font-size="17.64" font-weight="bold">·</tspan>I<tspan font-size="17.64" font-weight="bold">·</tspan>won’t<tspan font-size="17.64" font-weight="bold">·</tspan></text>
<text x="48.2" y="482.27" textLength="269" lengthAdjust="spacingAndGlyphs" font-size="21" fill="#000">arrive<tspan font-size="17.64" font-weight="bold">·</tspan>on<tspan font-size="17.64" font-weight="bold">·</tspan>the<tspan font-size="17.64" font-weight="bold">·</tspan>day<tspan font-size="17.64" font-weight="bold">·</tspan>and<tspan font-size="17.64" font-weight="bold">·</tspan>think,<tspan font-size="17.64" font-weight="bold">·</tspan></text>
<text x="317.2" y="482.27" textLength="20.8" lengthAdjust="spacingAndGlyphs" font-size="21" fill="#d13438">‘O</text>
<rect x="316.6" y="486.5" width="21.6" height="1.600" fill="#d13438"/>
<text x="338" y="482.27" textLength="12.6" lengthAdjust="spacingAndGlyphs" font-size="21" fill="#d13438">o</text>
<rect x="338.0" y="477.1" width="12.6" height="1.600" fill="#d13438"/>
<text x="350.6" y="482.27" textLength="278.8" lengthAdjust="spacingAndGlyphs" font-size="21" fill="#000">h<tspan font-size="17.64" font-weight="bold">·</tspan>no,<tspan font-size="17.64" font-weight="bold">·</tspan>how<tspan font-size="17.64" font-weight="bold">·</tspan>did<tspan font-size="17.64" font-weight="bold">·</tspan>I<tspan font-size="17.64" font-weight="bold">·</tspan>not<tspan font-size="17.64" font-weight="bold">·</tspan>spot<tspan font-size="17.64" font-weight="bold">·</tspan>that!</text>
<text x="629.4" y="482.27" textLength="7.1" lengthAdjust="spacingAndGlyphs" font-size="21" fill="#d13438">’</text>
<rect x="628.8" y="486.5" width="7.9" height="1.600" fill="#d13438"/>
<text x="636.5" y="482.27" textLength="396.3" lengthAdjust="spacingAndGlyphs" font-size="21" fill="#000"><tspan font-size="17.64" font-weight="bold">·</tspan>I<tspan font-size="17.64" font-weight="bold">·</tspan>am<tspan font-size="17.64" font-weight="bold">·</tspan>hoping<tspan font-size="17.64" font-weight="bold">·</tspan>a<tspan font-size="17.64" font-weight="bold">·</tspan>lot<tspan font-size="17.64" font-weight="bold">·</tspan>of<tspan font-size="17.64" font-weight="bold">·</tspan>high<tspan font-size="17.64" font-weight="bold">·</tspan>profile<tspan font-size="17.64" font-weight="bold">·</tspan>business<tspan font-size="17.64" font-weight="bold">·</tspan></text>
<text x="48.2" y="513.14" textLength="731.6" lengthAdjust="spacingAndGlyphs" font-size="21" fill="#000">people<tspan font-size="17.64" font-weight="bold">·</tspan>visit<tspan font-size="17.64" font-weight="bold">·</tspan>the<tspan font-size="17.64" font-weight="bold">·</tspan>exhibition,<tspan font-size="17.64" font-weight="bold">·</tspan>and<tspan font-size="17.64" font-weight="bold">·</tspan>even<tspan font-size="17.64" font-weight="bold">·</tspan>if<tspan font-size="17.64" font-weight="bold">·</tspan>some<tspan font-size="17.64" font-weight="bold">·</tspan>of<tspan font-size="17.64" font-weight="bold">·</tspan>them<tspan font-size="17.64" font-weight="bold">·</tspan>don’t<tspan font-size="17.64" font-weight="bold">·</tspan>look<tspan font-size="17.64" font-weight="bold">·</tspan>at<tspan font-size="17.64" font-weight="bold">·</tspan>every<tspan font-size="17.64" font-weight="bold">·</tspan>wor</text>
<text x="779.8" y="513.14" textLength="11.4" lengthAdjust="spacingAndGlyphs" font-size="21" fill="#d13438">d</text>
<rect x="779.2" y="517.3" width="12.2" height="1.600" fill="#d13438"/>
<text x="791.2" y="513.14" textLength="10.3" lengthAdjust="spacingAndGlyphs" font-size="21" fill="#d13438">k</text>
<rect x="791.2" y="507.9" width="10.3" height="1.600" fill="#d13438"/>
<text x="801.5" y="513.14" textLength="89" lengthAdjust="spacingAndGlyphs" font-size="21" fill="#000">,<tspan font-size="17.64" font-weight="bold">·</tspan>some<tspan font-size="17.64" font-weight="bold">·</tspan>of</text>
<text x="890.5" y="513.14" textLength="8" lengthAdjust="spacingAndGlyphs" font-size="21" fill="#d13438">t</text>
<rect x="890.5" y="507.9" width="8.0" height="1.600" fill="#d13438"/>
<text x="898.5" y="513.14" textLength="4.8" lengthAdjust="spacingAndGlyphs" font-size="21" fill="#000">·</text>
<text x="903.3" y="513.14" textLength="8" lengthAdjust="spacingAndGlyphs" font-size="21" fill="#d13438">t</text>
<rect x="902.7" y="517.3" width="8.8" height="1.600" fill="#d13438"/>
<text x="911.3" y="513.14" textLength="87.2" lengthAdjust="spacingAndGlyphs" font-size="21" fill="#000">hem<tspan font-size="17.64" font-weight="bold">·</tspan>will.</text>
<text x="998.5" y="513.14" textLength="12.5" lengthAdjust="spacingAndGlyphs" font-size="21" fill="#000" font-weight="bold">¶</text>
<text x="48.5" y="561" textLength="150.8" lengthAdjust="spacingAndGlyphs" font-size="21" fill="#000">Most<tspan font-size="17.64" font-weight="bold">·</tspan>important</text>
<text x="199.3" y="561" textLength="759" lengthAdjust="spacingAndGlyphs" font-size="21" fill="#000">,<tspan font-size="17.64" font-weight="bold">·</tspan>some<tspan font-size="17.64" font-weight="bold">·</tspan>of<tspan font-size="17.64" font-weight="bold">·</tspan>them<tspan font-size="17.64" font-weight="bold">·</tspan>will<tspan font-size="17.64" font-weight="bold">·</tspan>be<tspan font-size="17.64" font-weight="bold">·</tspan>from<tspan font-size="17.64" font-weight="bold">·</tspan>the<tspan font-size="17.64" font-weight="bold">·</tspan>industry<tspan font-size="17.64" font-weight="bold">·</tspan>I<tspan font-size="17.64" font-weight="bold">·</tspan>want<tspan font-size="17.64" font-weight="bold">·</tspan>to<tspan font-size="17.64" font-weight="bold">·</tspan>work<tspan font-size="17.64" font-weight="bold">·</tspan>in.<tspan font-size="17.64" font-weight="bold">·</tspan>They<tspan font-size="17.64" font-weight="bold">·</tspan>are<tspan font-size="17.64" font-weight="bold">·</tspan>looking<tspan font-size="17.64" font-weight="bold">·</tspan>for<tspan font-size="17.64" font-weight="bold">·</tspan></text>
<text x="48.2" y="591.87" textLength="742.1" lengthAdjust="spacingAndGlyphs" font-size="21" fill="#000">precision,<tspan font-size="17.64" font-weight="bold">·</tspan>and<tspan font-size="17.64" font-weight="bold">·</tspan>someone<tspan font-size="17.64" font-weight="bold">·</tspan>who<tspan font-size="17.64" font-weight="bold">·</tspan>can<tspan font-size="17.64" font-weight="bold">·</tspan>work<tspan font-size="17.64" font-weight="bold">·</tspan>independently,<tspan font-size="17.64" font-weight="bold">·</tspan>and<tspan font-size="17.64" font-weight="bold">·</tspan>there<tspan font-size="17.64" font-weight="bold">·</tspan>is<tspan font-size="17.64" font-weight="bold">·</tspan>no<tspan font-size="17.64" font-weight="bold">·</tspan>hiding<tspan font-size="17.64" font-weight="bold">·</tspan>f</text>
<text x="790.3" y="591.87" textLength="12.5" lengthAdjust="spacingAndGlyphs" font-size="21" fill="#d13438">o</text>
<rect x="790.3" y="586.7" width="12.5" height="1.600" fill="#d13438"/>
<text x="802.8" y="591.87" textLength="7.8" lengthAdjust="spacingAndGlyphs" font-size="21" fill="#000">r</text>
<text x="810.6" y="591.87" textLength="12.4" lengthAdjust="spacingAndGlyphs" font-size="21" fill="#d13438">o</text>
<rect x="810.0" y="596.1" width="13.2" height="1.600" fill="#d13438"/>
<text x="823" y="591.87" textLength="163.6" lengthAdjust="spacingAndGlyphs" font-size="21" fill="#000">m<tspan font-size="17.64" font-weight="bold">·</tspan>their<tspan font-size="17.64" font-weight="bold">·</tspan>powers<tspan font-size="17.64" font-weight="bold">·</tspan>o</text>
<text x="986.6" y="591.87" textLength="6.9" lengthAdjust="spacingAndGlyphs" font-size="21" fill="#d13438">f</text>
<rect x="986.0" y="596.1" width="7.7" height="1.600" fill="#d13438"/>
<text x="993.5" y="591.87" textLength="8" lengthAdjust="spacingAndGlyphs" font-size="21" fill="#d13438">r</text>
<rect x="993.5" y="586.7" width="8.0" height="1.600" fill="#d13438"/>
<text x="1001.5" y="591.87" textLength="5" lengthAdjust="spacingAndGlyphs" font-size="21" fill="#000">·</text>
<text x="48.2" y="622.74" textLength="119.3" lengthAdjust="spacingAndGlyphs" font-size="21" fill="#000">observation.</text>
<text x="167.5" y="622.74" textLength="13.7" lengthAdjust="spacingAndGlyphs" font-size="21" fill="#000" font-weight="bold">¶</text>
<text x="48" y="671.2" textLength="371" lengthAdjust="spacingAndGlyphs" font-size="21" fill="#000">That<tspan font-size="17.64" font-weight="bold">·</tspan>is<tspan font-size="17.64" font-weight="bold">·</tspan>why<tspan font-size="17.64" font-weight="bold">·</tspan>I<tspan font-size="17.64" font-weight="bold">·</tspan>am<tspan font-size="17.64" font-weight="bold">·</tspan>sending<tspan font-size="17.64" font-weight="bold">·</tspan>you<tspan font-size="17.64" font-weight="bold">·</tspan>my<tspan font-size="17.64" font-weight="bold">·</tspan>‘blurb</text>
<text x="419" y="671.2" textLength="7.5" lengthAdjust="spacingAndGlyphs" font-size="21" fill="#d13438">’</text>
<rect x="418.4" y="675.4" width="8.3" height="1.600" fill="#d13438"/>
<text x="426.5" y="671.2" textLength="112.5" lengthAdjust="spacingAndGlyphs" font-size="21" fill="#000"><tspan font-size="17.64" font-weight="bold">·</tspan>to<tspan font-size="17.64" font-weight="bold">·</tspan>be<tspan font-size="17.64" font-weight="bold">·</tspan>proof</text>
<text x="539" y="671.2" textLength="7.3" lengthAdjust="spacingAndGlyphs" font-size="21" fill="#d13438">-</text>
<rect x="539.0" y="666.0" width="7.3" height="1.600" fill="#d13438"/>
<text x="546.3" y="671.2" textLength="506.9" lengthAdjust="spacingAndGlyphs" font-size="21" fill="#000">read<tspan font-size="17.64" font-weight="bold">·</tspan>by<tspan font-size="17.64" font-weight="bold">·</tspan>someone<tspan font-size="17.64" font-weight="bold">·</tspan>I<tspan font-size="17.64" font-weight="bold">·</tspan>know<tspan font-size="17.64" font-weight="bold">·</tspan>I<tspan font-size="17.64" font-weight="bold">·</tspan>can<tspan font-size="17.64" font-weight="bold">·</tspan>trust.<tspan font-size="17.64" font-weight="bold">·</tspan>I<tspan font-size="17.64" font-weight="bold">·</tspan>don’t<tspan font-size="17.64" font-weight="bold">·</tspan>just<tspan font-size="17.64" font-weight="bold">·</tspan>want<tspan font-size="17.64" font-weight="bold">·</tspan></text>
<text x="48.2" y="702.07" textLength="239.3" lengthAdjust="spacingAndGlyphs" font-size="21" fill="#000">a<tspan font-size="17.64" font-weight="bold">·</tspan>great<tspan font-size="17.64" font-weight="bold">·</tspan>project<tspan font-size="17.64" font-weight="bold">·</tspan>–<tspan font-size="17.64" font-weight="bold">·</tspan>and<tspan font-size="17.64" font-weight="bold">·</tspan>my<tspan font-size="17.64" font-weight="bold">·</tspan></text>
<text x="287.5" y="702.07" textLength="150.3" lengthAdjust="spacingAndGlyphs" font-size="21" fill="#000">voice-operated<tspan font-size="17.64" font-weight="bold">·</tspan></text>
<text x="437.8" y="702.07" textLength="128.7" lengthAdjust="spacingAndGlyphs" font-size="21" fill="#000">hoist<tspan font-size="17.64" font-weight="bold">·</tspan>IS<tspan font-size="17.64" font-weight="bold">·</tspan>great<tspan font-size="17.64" font-weight="bold">·</tspan></text>
<text x="566.5" y="702.07" textLength="12.3" lengthAdjust="spacingAndGlyphs" font-size="21" fill="#d13438">–</text>
<rect x="565.9" y="706.3" width="13.1" height="1.600" fill="#d13438"/>
<text x="578.8" y="702.07" textLength="7.7" lengthAdjust="spacingAndGlyphs" font-size="21" fill="#d13438">-</text>
<rect x="578.8" y="696.9" width="7.7" height="1.600" fill="#d13438"/>
<text x="586.5" y="702.07" textLength="453.7" lengthAdjust="spacingAndGlyphs" font-size="21" fill="#000"><tspan font-size="17.64" font-weight="bold">·</tspan>I<tspan font-size="17.64" font-weight="bold">·</tspan>want<tspan font-size="17.64" font-weight="bold">·</tspan>the<tspan font-size="17.64" font-weight="bold">·</tspan>presentation<tspan font-size="17.64" font-weight="bold">·</tspan>to<tspan font-size="17.64" font-weight="bold">·</tspan>be<tspan font-size="17.64" font-weight="bold">·</tspan>free<tspan font-size="17.64" font-weight="bold">·</tspan>of<tspan font-size="17.64" font-weight="bold">·</tspan>mistakes.<tspan font-size="17.64" font-weight="bold">·</tspan></text>
<text x="48" y="732.94" textLength="310.5" lengthAdjust="spacingAndGlyphs" font-size="21" fill="#000">And<tspan font-size="17.64" font-weight="bold">·</tspan>when<tspan font-size="17.64" font-weight="bold">·</tspan>you’ve<tspan font-size="17.64" font-weight="bold">·</tspan>been<tspan font-size="17.64" font-weight="bold">·</tspan>living<tspan font-size="17.64" font-weight="bold">·</tspan>on<tspan font-size="17.64" font-weight="bold">·</tspan></text>
<text x="358.5" y="732.94" textLength="11.8" lengthAdjust="spacingAndGlyphs" font-size="21" fill="#d13438">R</text>
<rect x="357.9" y="737.1" width="12.6" height="1.600" fill="#d13438"/>
<text x="370.3" y="732.94" textLength="8.5" lengthAdjust="spacingAndGlyphs" font-size="21" fill="#d13438">r</text>
<rect x="370.3" y="727.7" width="8.5" height="1.600" fill="#d13438"/>
<text x="378.8" y="732.94" textLength="30" lengthAdjust="spacingAndGlyphs" font-size="21" fill="#000">ed<tspan font-size="17.64" font-weight="bold">·</tspan></text>
<text x="408.8" y="732.94" textLength="11.7" lengthAdjust="spacingAndGlyphs" font-size="21" fill="#d13438">B</text>
<rect x="408.2" y="737.1" width="12.5" height="1.600" fill="#d13438"/>
<text x="420.5" y="732.94" textLength="13.3" lengthAdjust="spacingAndGlyphs" font-size="21" fill="#d13438">b</text>
<rect x="420.5" y="727.7" width="13.3" height="1.600" fill="#d13438"/>
<text x="433.8" y="732.94" textLength="608.7" lengthAdjust="spacingAndGlyphs" font-size="21" fill="#000">ull<tspan font-size="17.64" font-weight="bold">·</tspan>for<tspan font-size="17.64" font-weight="bold">·</tspan>two<tspan font-size="17.64" font-weight="bold">·</tspan>weeks<tspan font-size="17.64" font-weight="bold">·</tspan>you<tspan font-size="17.64" font-weight="bold">·</tspan>need<tspan font-size="17.64" font-weight="bold">·</tspan>an<tspan font-size="17.64" font-weight="bold">·</tspan>outside<tspan font-size="17.64" font-weight="bold">·</tspan>observer<tspan font-size="17.64" font-weight="bold">·</tspan>to<tspan font-size="17.64" font-weight="bold">·</tspan>confirm<tspan font-size="17.64" font-weight="bold">·</tspan>that<tspan font-size="17.64" font-weight="bold">·</tspan></text>
<text x="48.2" y="763.81" textLength="706.8" lengthAdjust="spacingAndGlyphs" font-size="21" fill="#000">your<tspan font-size="17.64" font-weight="bold">·</tspan>script<tspan font-size="17.64" font-weight="bold">·</tspan>is<tspan font-size="17.64" font-weight="bold">·</tspan>easy<tspan font-size="17.64" font-weight="bold">·</tspan>to<tspan font-size="17.64" font-weight="bold">·</tspan>understand,<tspan font-size="17.64" font-weight="bold">·</tspan>error-free<tspan font-size="17.64" font-weight="bold">·</tspan>and<tspan font-size="17.64" font-weight="bold">·</tspan>as<tspan font-size="17.64" font-weight="bold">·</tspan>impressive<tspan font-size="17.64" font-weight="bold">·</tspan>as<tspan font-size="17.64" font-weight="bold">·</tspan>possible.</text>
<text x="755" y="763.81" textLength="13" lengthAdjust="spacingAndGlyphs" font-size="21" fill="#000" font-weight="bold">¶</text>
<text x="48.5" y="811.7" textLength="13" lengthAdjust="spacingAndGlyphs" font-size="21" fill="#000" font-weight="bold">¶</text>
<rect x="1203" y="290.7" width="3" height="108.500" fill="#d13438"/>
<circle cx="1241" cy="315.5" r="18" fill="#d13438"/>
<text x="1236.2" y="320.8" textLength="8" lengthAdjust="spacingAndGlyphs" font-size="14.5" fill="#fbeaea" stroke="#d13438" stroke-width="0.35">JI</text>
<text x="1274.3" y="317.2" textLength="72" lengthAdjust="spacingAndGlyphs" font-size="17.5" fill="#000" font-weight="bold">Jon Idle</text>
<text x="1275" y="341.3" textLength="191.4" lengthAdjust="spacingAndGlyphs" font-size="17" fill="#000">‘voice-operated’<tspan font-size="14.28" font-weight="bold">·</tspan>below<tspan font-weight="bold">¶</tspan></text>
<rect x="1203" y="405.2" width="3" height="108.500" fill="#d13438"/>
<circle cx="1241" cy="430.0" r="18" fill="#d13438"/>
<text x="1236.2" y="435.33" textLength="8" lengthAdjust="spacingAndGlyphs" font-size="14.5" fill="#fbeaea" stroke="#d13438" stroke-width="0.35">JI</text>
<text x="1274.3" y="431.73" textLength="72" lengthAdjust="spacingAndGlyphs" font-size="17.5" fill="#000" font-weight="bold">Jon Idle</text>
<text x="1275" y="455.83" textLength="152.9" lengthAdjust="spacingAndGlyphs" font-size="17" fill="#000">‘Graduates’<tspan font-size="14.28" font-weight="bold">·</tspan>below<tspan font-weight="bold">¶</tspan></text>
<rect x="1203" y="519.8" width="3" height="108.500" fill="#d13438"/>
<circle cx="1241" cy="544.6" r="18" fill="#d13438"/>
<text x="1236.2" y="549.86" textLength="8" lengthAdjust="spacingAndGlyphs" font-size="14.5" fill="#fbeaea" stroke="#d13438" stroke-width="0.35">JI</text>
<text x="1274.3" y="546.26" textLength="72" lengthAdjust="spacingAndGlyphs" font-size="17.5" fill="#000" font-weight="bold">Jon Idle</text>
<text x="1275" y="570.36" textLength="191.4" lengthAdjust="spacingAndGlyphs" font-size="17" fill="#000">‘post-graduates’<tspan font-size="14.28" font-weight="bold">·</tspan>above<tspan font-weight="bold">¶</tspan></text>
<rect x="1203" y="634.3" width="3" height="108.500" fill="#d13438"/>
<circle cx="1241" cy="659.1" r="18" fill="#d13438"/>
<text x="1236.2" y="664.39" textLength="8" lengthAdjust="spacingAndGlyphs" font-size="14.5" fill="#fbeaea" stroke="#d13438" stroke-width="0.35">JI</text>
<text x="1274.3" y="660.79" textLength="72" lengthAdjust="spacingAndGlyphs" font-size="17.5" fill="#000" font-weight="bold">Jon Idle</text>
<text x="1275" y="684.89" textLength="237.7" lengthAdjust="spacingAndGlyphs" font-size="17" fill="#000">Consider<tspan font-size="14.28" font-weight="bold">·</tspan>‘More<tspan font-size="14.28" font-weight="bold">·</tspan>importantly,’<tspan font-weight="bold">¶</tspan></text>
<rect x="1203" y="748.8" width="3" height="108.500" fill="#d13438"/>
<circle cx="1241" cy="773.6" r="18" fill="#d13438"/>
<text x="1236.2" y="778.92" textLength="8" lengthAdjust="spacingAndGlyphs" font-size="14.5" fill="#fbeaea" stroke="#d13438" stroke-width="0.35">JI</text>
<text x="1274.3" y="775.32" textLength="72" lengthAdjust="spacingAndGlyphs" font-size="17.5" fill="#000" font-weight="bold">Jon Idle</text>
<text x="1275" y="799.42" textLength="199.3" lengthAdjust="spacingAndGlyphs" font-size="17" fill="#000">‘voice-controlled’<tspan font-size="14.28" font-weight="bold">·</tspan>above<tspan font-weight="bold">¶</tspan></text>
</svg>
<div id="status"></div>
<svg class="abs" style="left:0;top:987px" width="1680" height="23" viewBox="0 987 1680 23" fill="none">
 <!-- proofing icon -->
 <path d="M156.500 992.500c2.500-.8 4.500-.6 6 .5v11c-1.500-1-3.500-1.200-6-.5z" stroke="#666" stroke-width="1"/>
 <path d="M162.500 1004c1.300-1 3.200-1.300 5.500-.7v-3" stroke="#666" stroke-width="1"/>
 <path d="M164 996.500l2 2.200 4-4.700" stroke="#666" stroke-width="1.200"/>
  <!-- read mode -->
 <path d="M1399.500 994c-1.800-1.300-3.800-1.600-6-1v10c2.200-.6 4.200-.3 6 1c1.800-1.300 3.800-1.600 6-1v-10c-2.200-.6-4.200-.3-6 1zM1399.500 994v10" stroke="#666" stroke-width="1"/>
 <path d="M1395 995.700h3M1395 997.700h3M1395 999.700h3M1395 1001.700h3M1401 995.700h3M1401 997.700h3M1401 999.700h3M1401 1001.700h3" stroke="#777" stroke-width=".8"/>
 <path d="M1398.300 1004.500l1.200 1.300l1.200-1.300" stroke="#666" stroke-width=".9"/>
 <!-- print layout selected -->
 <rect x="1420.500" y="988" width="39" height="22" fill="#c6c6c6"/>
 <rect x="1433.500" y="992.500" width="13" height="12" stroke="#555" stroke-width="1"/>
 <path d="M1435.500 995.500h9M1435.500 997.500h9M1435.500 999.500h9M1435.500 1001.500h9" stroke="#555" stroke-width=".9"/>
 <!-- web layout -->
 <path d="M1478 1003.500h-4.500v-11h11v4" stroke="#666" stroke-width="1"/>
 <path d="M1475.500 995h7M1475.500 997.500h5M1475.500 1000h3" stroke="#777" stroke-width=".8"/>
 <circle cx="1483" cy="1001.500" r="3.600" fill="#777"/>
 <path d="M1480.500 1000.500c1.500.8 3.500.8 5 0M1483 998v7" stroke="#f3f3f3" stroke-width=".7"/>
 <!-- zoom slider -->
 <path d="M1506.500 998.500h7" stroke="#555" stroke-width="1.200"/>
 <path d="M1519 999.300h100" stroke="#9a9a9a" stroke-width="1.200"/>
 <path d="M1569.500 996v6.500" stroke="#9a9a9a" stroke-width="1"/>
 <rect x="1574" y="994" width="5" height="11" fill="#666"/>
 <path d="M1624.500 998.500h7M1628 995v7" stroke="#555" stroke-width="1.200"/>
</svg>
<div id="taskbar"></div>
<svg class="abs" style="left:0;top:1010px" width="1680" height="40" viewBox="0 1010 1680 40" fill="none">
 <!-- start -->
 <path d="M15.500 1024.200l6.700-.9v6.400h-6.700zM23 1023.200l9-1.200v7.700h-9zM15.500 1030.500h6.700v6.400l-6.700-.9zM23 1030.500h9v7.700l-9-1.200z" fill="#fff"/>
 <!-- search box -->
 <rect x="48" y="1011" width="343.500" height="39" fill="#f3f3f3"/>
 <rect x="48" y="1010" width="343.500" height="1" fill="#8a8a8a"/>
 <circle cx="70" cy="1027.500" r="5.300" stroke="#333" stroke-width="1.300"/><path d="M66.200 1031.500l-5.700 6" stroke="#333" stroke-width="1.400"/>
 <!-- cortana -->
 <circle cx="416" cy="1030" r="7" stroke="#fff" stroke-width="2.200"/>
 <!-- task view -->
 <g stroke="#fff" stroke-width="1.200"><path d="M456 1023h11.500M456 1036.500h11.500M470.500 1022v15.500"/><rect x="458" y="1025.500" width="8" height="8.500"/></g><rect x="468.800" y="1025.500" width="3" height="3" fill="#fff"/>
 <!-- edge -->
 <defs>
  <linearGradient id="eg1" x1="0" y1="0" x2="1" y2="1"><stop offset="0" stop-color="#35c1f1"/><stop offset=".5" stop-color="#1b8fd9"/><stop offset="1" stop-color="#0c59a4"/></linearGradient>
  <linearGradient id="eg2" x1="0" y1="0" x2="1" y2="0"><stop offset="0" stop-color="#2fbf6a"/><stop offset="1" stop-color="#6fdc5a"/></linearGradient>
  <linearGradient id="ff" x1="0" y1="0" x2="0" y2="1"><stop offset="0" stop-color="#ffd43b"/><stop offset=".45" stop-color="#ff8a16"/><stop offset="1" stop-color="#e31587"/></linearGradient>
 </defs>
 <circle cx="515" cy="1030" r="12" fill="url(#eg1)"/>
 <path d="M509 1019.600c6-3.200 14.500-.8 17.500 6.500c.8 2.200.8 4.500 0 6.500c-1.500 3-4.500 4-7.500 3.500c2-1 3-3.500 2-6c-1.500-4.500-6-7.500-12-10.500z" fill="url(#eg2)"/>
 <path d="M509.500 1032.500c0-3.200 3-5.500 6.500-4.500c2 .7 2.700 2.500 1.700 4c2.500 1.500 5.500 1.300 8-.5c-.8 5-4.500 8.500-9 8.500c-4.500 0-7.200-3.500-7.200-7.500z" fill="#0d55a3"/>
 <!-- explorer -->
 <rect x="544.500" y="1048" width="39" height="2" fill="#76b9ed"/>
 <path d="M553 1021.500h8l2 2.500h12v13h-22z" fill="#f5b83d"/><path d="M553 1026.500h22v12h-22z" fill="#fcd36b"/>
 <path d="M558.500 1038.500v-5.500h11v5.500h-3v-3h-5v3z" fill="#3c8fdd"/>
 <!-- store -->
 <path d="M601 1026.800h23.500l-.8 15.200h-21.900z" fill="#f2f2f2"/><path d="M607.500 1027v-3.500a5 5 0 0 1 10 0v3.500" stroke="#e4e4e4" stroke-width="1.700"/>
 <rect x="608" y="1029.300" width="4.200" height="4" fill="#f25022"/><rect x="613" y="1029.300" width="4.200" height="4" fill="#7fba00"/>
 <rect x="608" y="1034.100" width="4.200" height="4" fill="#00a4ef"/><rect x="613" y="1034.100" width="4.200" height="4" fill="#ffb900"/>
 <!-- firefox -->
 <circle cx="662" cy="1031" r="11" fill="url(#ff)"/>
 <path d="M662 1018c2 2 5 3 6 6c1-2 .5-4-.5-5.500c4 2 6.500 6.500 6 11.500c-1-3-3-4.500-5-5c1 3-1 6-4 6c-3.500 0-5-3-4-5.500c-2 0-3-2-2.500-3.500c1.500 1 3 .5 4-4z" fill="#ffbd2e"/>
 <circle cx="661.500" cy="1031.500" r="5" fill="#7a3fd6"/><path d="M657 1029c2-1 4-1 6 0c-1 2-3 3-5 3z" fill="#ff9a2e"/>
 <!-- booking -->
 <rect x="698.500" y="1018.500" width="23.500" height="23.500" rx="3" fill="#0c3b7c"/>
 <circle cx="715.600" cy="1034.600" r="1.300" fill="#19b3ea"/>
 <!-- mail -->
 <path d="M748 1026.500l12.200-8l12.200 8z" fill="#0f5ea8"/><rect x="748" y="1026.500" width="24.400" height="14.500" fill="#1f9bf0"/>
 <path d="M750.500 1026.500h19.400l-9.700 7.300z" fill="#f4f9fe"/><path d="M748 1041v-14.500l12.200 9.200z" fill="#35b8f6"/><path d="M748 1041l12.200-8.300l12.200 8.300z" fill="#2aa7f2"/>
 <!-- chrome -->
 <rect x="789.500" y="1048" width="39.500" height="2" fill="#76b9ed"/>
 <circle cx="809" cy="1030" r="11.500" fill="#dd4b3e"/>
 <path d="M813.500 1027.300L820.200 1027.300A11.500 11.500 0 0 1 805.500 1041Z" fill="#ffce44"/>
 <path d="M809 1035.300L805.500 1041A11.500 11.500 0 0 1 799.300 1023.800L804.400 1032.600Z" fill="#1da462"/>
 <path d="M809 1030L813.500 1027.300L805.500 1041L809 1035.300Z" fill="#ffce44"/>
 <circle cx="809" cy="1030" r="5.300" fill="#fff"/><circle cx="809" cy="1030" r="4.200" fill="#4c8bf5"/>
 <!-- word (active) -->
  <rect x="838" y="1048" width="31" height="2" fill="#76b9ed"/><rect x="869.800" y="1048" width="7.700" height="2" fill="#5d93c6"/>
 <rect x="853" y="1019" width="17" height="22" rx="1.500" fill="#41a5ee"/><rect x="853" y="1024.500" width="17" height="5.500" fill="#2b7cd3"/><rect x="853" y="1030" width="17" height="5.500" fill="#185abd"/><rect x="853" y="1035.500" width="17" height="5.500" rx="1" fill="#103f91"/>
 <rect x="846" y="1023.500" width="13" height="13" rx="1.300" fill="#185abd"/>
 <!-- excel -->
 <rect x="887" y="1048" width="40" height="2" fill="#76b9ed"/>
 <rect x="902" y="1019" width="17" height="22" rx="1.500" fill="#21a366"/><rect x="902" y="1019" width="8.500" height="11" fill="#107c41"/><rect x="910.500" y="1019" width="8.500" height="5.500" fill="#33c481"/><rect x="902" y="1035.500" width="17" height="5.500" rx="1" fill="#185c37"/>
 <rect x="895" y="1023.500" width="13" height="13" rx="1.300" fill="#107c41"/>
 <!-- tray -->
 <path d="M1383.500 1033l5.500-5.500l5.500 5.500" stroke="#fff" stroke-width="1.300"/>
 <g stroke="#fff" stroke-width="1.100"><rect x="1408.500" y="1026" width="7" height="7.500" rx="1.500"/><path d="M1415.500 1028.500l3-1.500v5.500l-3-1.500M1409 1023.500c1.500-1.300 5-1.300 6.500 0M1409 1036c1.500 1.300 5 1.300 6.500 0"/></g>
 <g stroke="#9a9a9a" stroke-width="1.300"><path d="M1433 1036a11 11 0 0 1 11-11"/><path d="M1436.500 1036a7.500 7.500 0 0 1 7.500-7.500"/></g>
 <path d="M1440 1036a4 4 0 0 1 4-4" stroke="#fff" stroke-width="1.300"/><circle cx="1442.800" cy="1035" r="1.300" fill="#fff"/>
 <g fill="#fff"><path d="M1459 1023.500l3.500 2.200-3.500 2.200-3.500-2.200zM1466 1023.500l3.500 2.200-3.500 2.200-3.500-2.200zM1466 1028l3.500 2.200-3.500 2.200-3.500-2.200zM1462.500 1032.500l2.500 1.600-2.500 1.600-2.500-1.600z"/></g>
 <rect x="1452.800" y="1029.800" width="7.700" height="7.200" rx="1" fill="#e81123"/>
 <g stroke="#fff" stroke-width="1.100"><path d="M1477.500 1024.500l14.500-2v11.500l-5 .8"/><path d="M1477.500 1024.500v11.500l6 .9"/><path d="M1481.500 1031.500c.5-2.500 3-4 5.500-3M1487 1026.500v2.500h-2.500"/></g>
 <circle cx="1489.500" cy="1034.500" r="3.400" fill="#ff9c1a"/>
 <path d="M1501.500 1027.500h2.500l3.500-3.500v12l-3.500-3.500h-2.500z" stroke="#fff" stroke-width="1.100"/>
 <circle cx="1512.500" cy="1034" r="4.200" fill="#e81123"/><path d="M1510.800 1032.300l3.400 3.400M1514.200 1032.300l-3.400 3.400" stroke="#fff" stroke-width="1.100"/>
 <!-- notifications -->
 <path d="M1639.500 1022.500h15.500v11h-10.500l-3 3v-3h-2z" fill="#fff"/>
 <path d="M1642 1025.500h10.500M1642 1028h10.500M1642 1030.500h7" stroke="#2a2927" stroke-width=".9"/>
 <circle cx="1654.500" cy="1037" r="7.300" fill="#2a2927" stroke="#cfcfcf" stroke-width="1.100"/>
 <rect x="1674.500" y="1010" width="1" height="40" fill="#777"/>
</svg>
<svg class="abs" style="left:0;top:0;pointer-events:none" width="1680" height="1050" viewBox="0 0 1680 1050" font-family="Liberation Sans, sans-serif">
<defs><clipPath id="clipTitle"><rect x="960" y="78" width="80" height="30"/></clipPath><clipPath id="pv"><rect x="683" y="74" width="59.2" height="34"/><rect x="755" y="74" width="59.2" height="34"/><rect x="827" y="74" width="59.2" height="34"/><rect x="899" y="74" width="59.2" height="34"/><rect x="971" y="74" width="59.2" height="34"/><rect x="1043" y="74" width="59.2" height="34"/><rect x="1115" y="74" width="59.2" height="34"/><rect x="1187" y="74" width="59.2" height="34"/><rect x="1259" y="74" width="59.2" height="34"/><rect x="1331" y="74" width="59.2" height="34"/><rect x="1403" y="74" width="59.2" height="34"/></clipPath></defs>
<g clip-path="url(#pv)"><text x="683.8" y="97" textLength="60.8" lengthAdjust="spacingAndGlyphs" font-size="13.5" fill="#000">AaBbCcDc</text>
<text x="755.8" y="97" textLength="60.8" lengthAdjust="spacingAndGlyphs" font-size="13.5" fill="#000">AaBbCcDc</text>
<text x="828" y="99" textLength="61.6" lengthAdjust="spacingAndGlyphs" font-size="19.5" fill="#2e74b5" stroke="#fff" stroke-width="0.5">AaBbCc</text>
<text x="899.5" y="98" textLength="62.2" lengthAdjust="spacingAndGlyphs" font-size="16" fill="#2e74b5" stroke="#fff" stroke-width="0.4">AaBbCcD</text>
<text x="1043.8" y="97" textLength="61.7" lengthAdjust="spacingAndGlyphs" font-size="13" fill="#5a5a5a">AaBbCcD</text>
<text x="1115.8" y="97" textLength="60.8" lengthAdjust="spacingAndGlyphs" font-size="13.5" fill="#404040" font-style="italic">AaBbCcDc</text>
<text x="1187.8" y="97" textLength="60.8" lengthAdjust="spacingAndGlyphs" font-size="13.5" fill="#000" font-style="italic">AaBbCcDc</text>
<text x="1259.8" y="97" textLength="60.8" lengthAdjust="spacingAndGlyphs" font-size="13.5" fill="#5b9bd5" font-style="italic">AaBbCcDc</text>
<text x="1331.8" y="97" textLength="60.8" lengthAdjust="spacingAndGlyphs" font-size="13.5" fill="#000" font-weight="bold">AaBbCcDc</text>
<text x="1403.8" y="97" textLength="60.8" lengthAdjust="spacingAndGlyphs" font-size="13.5" fill="#404040" font-style="italic">AaBbCcDc</text></g>
<text x="792" y="20" textLength="94" lengthAdjust="spacingAndGlyphs" font-size="12.5" fill="#c3cfe6">Sample 1  -  Word</text>
<text x="1409" y="20" textLength="40" lengthAdjust="spacingAndGlyphs" font-size="12.5" fill="#dfe6f3">Jon Idle</text>
<text x="1468" y="19" textLength="8" lengthAdjust="spacingAndGlyphs" font-size="9.5" fill="#7a7a7a">JI</text>
<text x="20" y="53" textLength="18" lengthAdjust="spacingAndGlyphs" font-size="12.3" fill="#ffffff">File</text>
<text x="73" y="53" textLength="33" lengthAdjust="spacingAndGlyphs" font-size="12.3" fill="#2b579a">Home</text>
<text x="133.3" y="53" textLength="28.5" lengthAdjust="spacingAndGlyphs" font-size="12.3" fill="#ffffff">Insert</text>
<text x="189.3" y="53" textLength="35.2" lengthAdjust="spacingAndGlyphs" font-size="12.3" fill="#ffffff">Design</text>
<text x="252.3" y="53" textLength="35.5" lengthAdjust="spacingAndGlyphs" font-size="12.3" fill="#ffffff">Layout</text>
<text x="315.3" y="53" textLength="56.5" lengthAdjust="spacingAndGlyphs" font-size="12.3" fill="#ffffff">References</text>
<text x="399" y="53" textLength="44.8" lengthAdjust="spacingAndGlyphs" font-size="12.3" fill="#ffffff">Mailings</text>
<text x="471.3" y="53" textLength="36.5" lengthAdjust="spacingAndGlyphs" font-size="12.3" fill="#ffffff">Review</text>
<text x="535" y="53" textLength="24.8" lengthAdjust="spacingAndGlyphs" font-size="12.3" fill="#ffffff">View</text>
<text x="587.3" y="53" textLength="24.5" lengthAdjust="spacingAndGlyphs" font-size="12.3" fill="#ffffff">Help</text>
<text x="667.5" y="53" textLength="149.3" lengthAdjust="spacingAndGlyphs" font-size="12.3" fill="#ffffff">Tell me what you want to do</text>
<text x="1627" y="53" textLength="29" lengthAdjust="spacingAndGlyphs" font-size="12.3" fill="#ffffff">Share</text>
<text x="15.5" y="116.5" textLength="27.5" lengthAdjust="spacingAndGlyphs" font-size="12" fill="#262626">Paste</text>
<text x="72.5" y="83" textLength="18" lengthAdjust="spacingAndGlyphs" font-size="12" fill="#a3a3a3">Cut</text>
<text x="72.5" y="106" textLength="27" lengthAdjust="spacingAndGlyphs" font-size="12" fill="#a3a3a3">Copy</text>
<text x="72.5" y="129" textLength="77.5" lengthAdjust="spacingAndGlyphs" font-size="12" fill="#262626">Format Painter</text>
<text x="48.5" y="152" textLength="50" lengthAdjust="spacingAndGlyphs" font-size="11.8" fill="#444444">Clipboard</text>
<text x="279.5" y="152" textLength="23" lengthAdjust="spacingAndGlyphs" font-size="11.8" fill="#444444">Font</text>
<text x="516.5" y="152" textLength="52" lengthAdjust="spacingAndGlyphs" font-size="11.8" fill="#444444">Paragraph</text>
<text x="1058.5" y="152" textLength="28" lengthAdjust="spacingAndGlyphs" font-size="11.8" fill="#444444">Styles</text>
<text x="1520.5" y="152" textLength="36.3" lengthAdjust="spacingAndGlyphs" font-size="11.8" fill="#444444">Editing</text>
<text x="176.5" y="91" textLength="71" lengthAdjust="spacingAndGlyphs" font-size="12" fill="#262626">Calibri (Body)</text>
<text x="270.5" y="91" textLength="11" lengthAdjust="spacingAndGlyphs" font-size="12" fill="#262626">11</text>
<text x="179.5" y="121" textLength="7.5" lengthAdjust="spacingAndGlyphs" font-size="12.5" fill="#3b3b3b" font-weight="bold">B</text>
<text x="202" y="121" textLength="6.5" lengthAdjust="spacingAndGlyphs" font-size="13.5" fill="#3b3b3b" font-style="italic" style="font-family:'Liberation Serif',serif">I</text>
<text x="223" y="121" textLength="8" lengthAdjust="spacingAndGlyphs" font-size="12.5" fill="#3b3b3b">U</text>
<text x="254" y="121.5" textLength="16" lengthAdjust="spacingAndGlyphs" font-size="10.5" fill="#3b3b3b">abc</text>
<text x="278" y="121.5" textLength="7" lengthAdjust="spacingAndGlyphs" font-size="12" fill="#3b3b3b" font-weight="bold">x</text>
<text x="286" y="124" textLength="4" lengthAdjust="spacingAndGlyphs" font-size="6.5" fill="#2b72c4" font-weight="bold">2</text>
<text x="300" y="121.5" textLength="7" lengthAdjust="spacingAndGlyphs" font-size="12" fill="#3b3b3b" font-weight="bold">x</text>
<text x="308" y="115" textLength="4" lengthAdjust="spacingAndGlyphs" font-size="6.5" fill="#2b72c4" font-weight="bold">2</text>
<text x="316" y="92" textLength="10" lengthAdjust="spacingAndGlyphs" font-size="14" fill="#3b3b3b">A</text>
<text x="339" y="92" textLength="8.5" lengthAdjust="spacingAndGlyphs" font-size="12" fill="#3b3b3b">A</text>
<text x="366.5" y="91" textLength="16" lengthAdjust="spacingAndGlyphs" font-size="12.5" fill="#3b3b3b">Aa</text>
<text x="481" y="81.5" textLength="3" lengthAdjust="spacingAndGlyphs" font-size="6.5" fill="#2b72c4" font-weight="bold">1</text>
<text x="481" y="87.5" textLength="3" lengthAdjust="spacingAndGlyphs" font-size="6.5" fill="#2b72c4" font-weight="bold">2</text>
<text x="481" y="93.5" textLength="3" lengthAdjust="spacingAndGlyphs" font-size="6.5" fill="#2b72c4" font-weight="bold">3</text>
<text x="514" y="81.5" textLength="3" lengthAdjust="spacingAndGlyphs" font-size="6.5" fill="#2b72c4" font-weight="bold">1</text>
<text x="517.5" y="87.5" textLength="3" lengthAdjust="spacingAndGlyphs" font-size="6.5" fill="#2b72c4" font-weight="bold">a</text>
<text x="522.5" y="93.5" textLength="1.5" lengthAdjust="spacingAndGlyphs" font-size="6.5" fill="#2b72c4" font-weight="bold">i</text>
<text x="610.5" y="85.5" textLength="6.5" lengthAdjust="spacingAndGlyphs" font-size="9.5" fill="#2b72c4">A</text>
<text x="611" y="93.5" textLength="5.5" lengthAdjust="spacingAndGlyphs" font-size="9.5" fill="#7a3f9d">Z</text>
<text x="642" y="92" textLength="12" lengthAdjust="spacingAndGlyphs" font-size="16" fill="#444">¶</text>
<text x="362" y="116" textLength="8.5" lengthAdjust="spacingAndGlyphs" font-size="9.5" fill="#3b3b3b">ab</text>
<text x="330.3" y="122.5" textLength="13" lengthAdjust="spacingAndGlyphs" font-size="19" fill="#fff" font-weight="bold" stroke="#3b7fd0" stroke-width="1.7" paint-order="stroke">A</text>
<text x="398" y="120.8" textLength="12" lengthAdjust="spacingAndGlyphs" font-size="16.5" fill="#3b3b3b">A</text>
<text x="1526.5" y="83" textLength="22" lengthAdjust="spacingAndGlyphs" font-size="12" fill="#262626">Find</text>
<text x="1526.5" y="106" textLength="40.5" lengthAdjust="spacingAndGlyphs" font-size="12" fill="#262626">Replace</text>
<text x="1526.5" y="129" textLength="29.5" lengthAdjust="spacingAndGlyphs" font-size="12" fill="#262626">Select</text>
<text x="1507.5" y="100.5" textLength="8" lengthAdjust="spacingAndGlyphs" font-size="9" fill="#7a3f9d" font-weight="bold">ab</text>
<text x="1512.5" y="107.5" textLength="10" lengthAdjust="spacingAndGlyphs" font-size="10" fill="#2b72c4" font-weight="bold">ac</text>
<text x="688.8" y="121" textLength="48.2" lengthAdjust="spacingAndGlyphs" font-size="12" fill="#444444">¶ Normal</text>
<text x="754.5" y="121" textLength="60.5" lengthAdjust="spacingAndGlyphs" font-size="12" fill="#444444">¶ No Spac...</text>
<text x="830" y="121" textLength="53" lengthAdjust="spacingAndGlyphs" font-size="12" fill="#444444">Heading 1</text>
<text x="902.5" y="121" textLength="53.3" lengthAdjust="spacingAndGlyphs" font-size="12" fill="#444444">Heading 2</text>
<text x="972" y="99.3" textLength="55" lengthAdjust="spacingAndGlyphs" font-size="30" fill="#000" clip-path="url(#clipTitle)" stroke="#fff" stroke-width="0.9">AaB</text>
<text x="990" y="121" textLength="22" lengthAdjust="spacingAndGlyphs" font-size="12" fill="#444444">Title</text>
<text x="1053" y="121" textLength="40" lengthAdjust="spacingAndGlyphs" font-size="12" fill="#444444">Subtitle</text>
<text x="1114.3" y="121" textLength="61.2" lengthAdjust="spacingAndGlyphs" font-size="12" fill="#444444">Subtle Em...</text>
<text x="1192.3" y="121" textLength="49.5" lengthAdjust="spacingAndGlyphs" font-size="12" fill="#444444">Emphasis</text>
<text x="1261" y="121" textLength="55" lengthAdjust="spacingAndGlyphs" font-size="12" fill="#444444">Intense E...</text>
<text x="1343" y="121" textLength="34.5" lengthAdjust="spacingAndGlyphs" font-size="12" fill="#444444">Strong</text>
<text x="1416" y="121" textLength="33" lengthAdjust="spacingAndGlyphs" font-size="12" fill="#444444">Quote</text>
<text x="7.5" y="1002.5" textLength="55.5" lengthAdjust="spacingAndGlyphs" font-size="11.5" fill="#444444">Page 1 of 1</text>
<text x="84.3" y="1002.5" textLength="52.5" lengthAdjust="spacingAndGlyphs" font-size="11.5" fill="#444444">230 words</text>
<text x="188" y="1002.5" textLength="130.8" lengthAdjust="spacingAndGlyphs" font-size="11.5" fill="#444444">English (United Kingdom)</text>
<text x="1645.7" y="1002.8" textLength="26.1" lengthAdjust="spacingAndGlyphs" font-size="11.5" fill="#444444">160%</text>
<text x="88" y="1035.7" textLength="127.5" lengthAdjust="spacingAndGlyphs" font-size="15" fill="#3b3b3b">Type here to search</text>
<text x="1527.2" y="1033.7" textLength="22.5" lengthAdjust="spacingAndGlyphs" font-size="12" fill="#fff">ENG</text>
<text x="1578.7" y="1024.8" textLength="26.1" lengthAdjust="spacingAndGlyphs" font-size="12" fill="#fff">10:24</text>
<text x="1562.9" y="1042.5" textLength="57.1" lengthAdjust="spacingAndGlyphs" font-size="12" fill="#fff">22/03/2021</text>
<text x="1651.5" y="1041" textLength="6" lengthAdjust="spacingAndGlyphs" font-size="11" fill="#fff" font-weight="bold">2</text>
<text x="704" y="1036" textLength="9.5" lengthAdjust="spacingAndGlyphs" font-size="15" fill="#fff" font-weight="bold">B</text>
<text x="848" y="1034" textLength="9" lengthAdjust="spacingAndGlyphs" font-size="10.5" fill="#fff" font-weight="bold">W</text>
<text x="898" y="1034" textLength="7" lengthAdjust="spacingAndGlyphs" font-size="10.5" fill="#fff" font-weight="bold">X</text>
<text x="1454.5" y="1036" textLength="4.3" lengthAdjust="spacingAndGlyphs" font-size="7.5" fill="#fff" font-weight="bold">5</text>
</svg>
</body>
</html>
